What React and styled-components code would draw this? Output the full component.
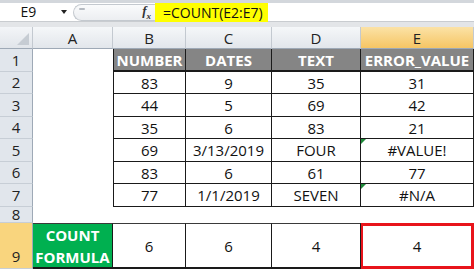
import React from 'react';
import styled, { createGlobalStyle } from 'styled-components';

const GlobalStyle = createGlobalStyle`
  html, body {
    margin: 0;
    padding: 0;
    background: #ffffff;
    overflow: hidden;
  }
  body {
    font-family: "Open Sans", "Noto Sans", sans-serif;
  }
`;

const Page = styled.div`
  width: 474px;
  height: 271px;
  overflow: hidden;
  background: #ffffff;
`;

const TopStrip = styled.div`
  height: 3px;
  background: #d3d7dc;
`;

const FormulaBar = styled.div`
  display: flex;
  align-items: center;
  height: 18px;
  background: #ffffff;
`;

const NameBox = styled.div`
  width: 57px;
  font-size: 14px;
  color: #111;
  text-align: center;
  line-height: 18px;
`;

const DropArrow = styled.div`
  width: 0;
  height: 0;
  margin-left: 4px;
  border-left: 3px solid transparent;
  border-right: 3px solid transparent;
  border-top: 4px solid #222;
`;

const Grip = styled.div`
  display: flex;
  align-items: center;
  margin-left: 6px;
  width: 82px;
  height: 17px;
  border: 1px solid #c4c9cf;
  border-right: none;
  border-radius: 9px 0 0 9px;
  background: linear-gradient(#fafbfc, #eceef1);
  box-sizing: border-box;
`;

const GripDot = styled.div`
  width: 6px;
  height: 2px;
  margin-left: 5px;
  margin-top: -6px;
  border-radius: 1px;
  background: #b5bac1;
`;

const Fx = styled.div`
  margin-left: auto;
  margin-right: 4px;
  font-family: "Liberation Serif", serif;
  font-style: italic;
  font-weight: bold;
  font-size: 13px;
  color: #333;
`;

const Formula = styled.div`
  width: 113px;
  height: 19px;
  margin-top: 1px;
  padding-left: 8px;
  box-sizing: border-box;
  background: #ffff00;
  font-size: 14px;
  line-height: 19px;
  color: #111;
`;

const Separator = styled.div`
  height: 6px;
  background: #e3e5e8;
  border-top: 1px solid #c9ccd0;
  box-sizing: border-box;
`;

const Sheet = styled.div`
  display: grid;
  grid-template-columns: 33px 80px 73px 86px 89px 113px;
  grid-template-rows: 22px 23px 22px 23px 22px 23px 22px 23px 16px 46px;
`;

const Corner = styled.div`
  position: relative;
  background: linear-gradient(#f3f5f8, #e1e5ea);
  border-right: 1px solid #c3c9d0;
  border-bottom: 1px solid #9ea9b6;
  box-sizing: border-box;

  &::after {
    content: '';
    position: absolute;
    right: 3px;
    bottom: 3px;
    border-left: 12px solid transparent;
    border-bottom: 12px solid #c6ccd3;
  }
`;

const ColHead = styled.div`
  display: flex;
  align-items: center;
  justify-content: center;
  font-size: 15px;
  color: #222;
  box-sizing: border-box;
  border-right: 1px solid #c3c9d0;
  border-bottom: 1px solid #9ea9b6;
  background: ${(p) => (p.$active
    ? 'linear-gradient(#fbe2a6, #f6c564)'
    : 'linear-gradient(#f5f7f9, #e2e6eb)')};
`;

const RowHead = styled.div`
  display: flex;
  align-items: center;
  justify-content: center;
  font-size: 15px;
  line-height: 1;
  color: #222;
  box-sizing: border-box;
  border-right: 1px solid #9ea9b6;
  border-bottom: 1px solid #c7ced6;
  padding-top: ${(p) => p.$padTop || 0}px;
  align-items: ${(p) => (p.$bottom ? 'flex-end' : 'center')};
  padding-bottom: ${(p) => (p.$bottom ? 4 : 0)}px;
  background: ${(p) => (p.$active ? '#f9d57e' : '#e1e6ec')};
`;

const Blank = styled.div`
  background: #ffffff;
`;

const Cell = styled.div`
  position: relative;
  display: flex;
  align-items: center;
  justify-content: center;
  box-sizing: border-box;
  font-size: 15px;
  color: #111;
  background: #ffffff;
  border-right: 1px solid #1a1a1a;
  border-bottom: ${(p) => p.$bottom || 1}px solid #1a1a1a;
  border-left: ${(p) => (p.$first ? '1px solid #1a1a1a' : 'none')};
`;

const HeadCell = styled(Cell)`
  background: #858585;
  color: #ffffff;
  font-weight: bold;
  border-bottom: 2px solid #1a1a1a;
`;

const ErrorFlag = styled.span`
  position: absolute;
  top: 0;
  left: 0;
  border-top: 5px solid #1f8a3a;
  border-right: 5px solid transparent;
`;

const TotalLabel = styled.div`
  display: flex;
  align-items: center;
  justify-content: center;
  text-align: center;
  box-sizing: border-box;
  background: #00b050;
  color: #ffffff;
  font-weight: bold;
  font-size: 15px;
  line-height: 22px;
  border-top: 1px solid #3a3a3a;
  border-right: 1px solid #1a1a1a;
  border-bottom: 2px solid #1a1a1a;
`;

const TotalCell = styled.div`
  display: flex;
  align-items: center;
  justify-content: center;
  box-sizing: border-box;
  font-size: 15px;
  color: #111;
  background: #ffffff;
  border-top: 1px solid #3a3a3a;
  border-right: 1px solid #1a1a1a;
  border-bottom: 2px solid #1a1a1a;
`;

const SelectedCell = styled(TotalCell)`
  border: 3px solid #e8141b;
  border-left-width: 2px;
`;

const columns = ['A', 'B', 'C', 'D', 'E'];

const headers = ['NUMBER', 'DATES', 'TEXT', 'ERROR_VALUE'];

const rows = [
  ['83', '9', '35', '31'],
  ['44', '5', '69', '42'],
  ['35', '6', '83', '21'],
  ['69', '3/13/2019', 'FOUR', '#VALUE!'],
  ['83', '6', '61', '77'],
  ['77', '1/1/2019', 'SEVEN', '#N/A'],
];

const flagged = [3, 5];

function App() {
  return (
    <Page>
      <GlobalStyle />
      <TopStrip />
      <FormulaBar>
        <NameBox>E9</NameBox>
        <DropArrow />
        <Grip>
          <GripDot />
          <Fx>f<sub style={{ fontSize: '9px' }}>x</sub></Fx>
        </Grip>
        <Formula>=COUNT(E2:E7)</Formula>
      </FormulaBar>
      <Separator />
      <Sheet>
        <Corner />
        {columns.map((c) => (
          <ColHead key={c} $active={c === 'E'}>{c}</ColHead>
        ))}

        <RowHead>1</RowHead>
        <Blank />
        {headers.map((h, i) => (
          <HeadCell key={h} $first={i === 0}>{h}</HeadCell>
        ))}

        {rows.map((r, ri) => (
          <React.Fragment key={ri}>
            <RowHead>{ri + 2}</RowHead>
            <Blank />
            {r.map((v, ci) => (
              <Cell key={ci} $first={ci === 0}>
                {ci === 3 && flagged.includes(ri) && <ErrorFlag />}
                {v}
              </Cell>
            ))}
          </React.Fragment>
        ))}

        <RowHead>8</RowHead>
        <Blank />
        <Blank />
        <Blank />
        <Blank />
        <Blank />

        <RowHead $active $bottom>9</RowHead>
        <TotalLabel>COUNT<br />FORMULA</TotalLabel>
        <TotalCell>6</TotalCell>
        <TotalCell>6</TotalCell>
        <TotalCell>4</TotalCell>
        <SelectedCell>4</SelectedCell>
      </Sheet>
    </Page>
  );
}

export default App;
